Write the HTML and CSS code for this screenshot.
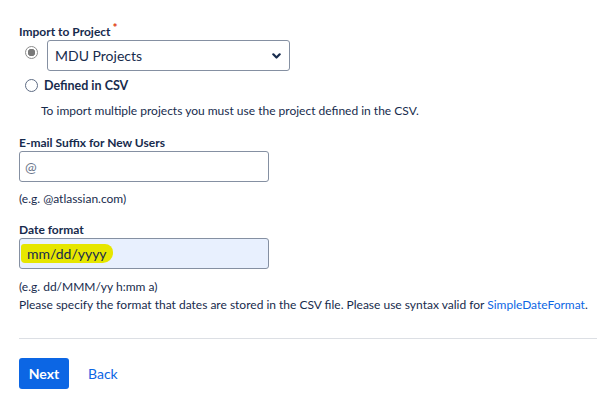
FILE: index.html
```html
<!DOCTYPE html>
<html lang="en">
<head>
<meta charset="UTF-8">
<title>Import to Project</title>
<link rel="stylesheet" href="styles.css">
</head>
<body>
<form class="import-form">
  <div class="field field-project">
    <div class="field-label">Import to Project<span class="required">*</span></div>
    <div class="radio-row">
      <span class="radio radio-checked"></span>
      <div class="select">
        <span>MDU Projects</span>
        <svg class="chevron" width="9" height="6" viewBox="0 0 9 6"><path d="M1.3 1.3 L4.5 4.5 L7.7 1.3" fill="none" stroke="#172b4d" stroke-width="2.2" stroke-linecap="round" stroke-linejoin="round"/></svg>
      </div>
    </div>
    <div class="radio-row radio-row-csv">
      <span class="radio"></span>
      <span class="radio-label">Defined in CSV</span>
    </div>
    <div class="help help-indented">To import multiple projects you must use the project defined in the CSV.</div>
  </div>

  <div class="field">
    <div class="field-label">E-mail Suffix for New Users</div>
    <div class="text-input">@</div>
    <div class="help">(e.g. @atlassian.com)</div>
  </div>

  <div class="field">
    <div class="field-label">Date format</div>
    <div class="text-input text-input-filled"><span class="marker">mm/dd/yyyy</span></div>
    <div class="help help-date">(e.g. dd/MMM/yy h:mm a)</div>
    <div class="help help-tight">Please specify the format that dates are stored in the CSV file. Please use syntax valid for <a href="#">SimpleDateFormat</a>.</div>
  </div>

  <div class="buttons">
    <button type="button" class="btn-primary">Next</button>
    <a href="#" class="btn-link">Back</a>
  </div>
</form>
</body>
</html>
```

FILE: styles.css
```css
body {
  margin: 0;
  background: #fff;
  color: #172b4d;
  font-family: Lato, "Liberation Sans", sans-serif;
}
.import-form {
  padding: 20px 0 0 19px;
}
.field {
  margin-bottom: 15px;
}
.field-project {
  margin-bottom: 16px;
}
.field-label {
  font-size: 12px;
  font-weight: bold;
  line-height: 16px;
}
.required {
  color: #de350b;
  font-size: 12px;
  vertical-align: 4px;
  margin-left: 2px;
}
.radio-row {
  display: flex;
  align-items: center;
  gap: 9px;
  margin-left: 6px;
}
.radio {
  box-sizing: border-box;
  width: 13px;
  height: 13px;
  border: 1px solid #5e6c84;
  border-radius: 50%;
  background: #fff;
  flex: none;
}
.radio-checked {
  border-color: #8d8d8d;
  background: radial-gradient(circle, #7a7a7a 0 3.5px, #fff 4px);
  align-self: flex-start;
  margin-top: 6px;
}
.select {
  box-sizing: border-box;
  width: 243px;
  height: 31px;
  border: 1px solid #8590a2;
  border-radius: 3px;
  display: flex;
  align-items: center;
  justify-content: space-between;
  padding: 0 8px 0 7px;
  font-size: 14px;
}
.radio-row-csv {
  margin-top: 7px;
  gap: 6px;
}
.radio-label {
  font-size: 12.5px;
  font-weight: bold;
}
.help {
  font-size: 12px;
  line-height: 16px;
  margin-top: 9px;
}
.help-indented {
  margin-left: 22px;
  margin-top: 10px;
}
.help-date {
  margin-top: 10px;
}
.help-tight {
  margin-top: 2px;
}
.text-input {
  box-sizing: border-box;
  width: 250px;
  height: 31px;
  border: 1px solid #8590a2;
  border-radius: 3px;
  display: flex;
  align-items: center;
  padding: 0 5px;
  font-size: 14px;
  color: #6b778c;
}
.text-input-filled {
  background: #e8f0fe;
  color: #172b4d;
  padding: 0 0 0 1px;
}
.marker {
  background: #e6e600;
  padding: 1px 6px 1px 6px;
  border-radius: 3px 8px 10px 4px;
}
a {
  color: #0c66e4;
  text-decoration: none;
}
.buttons {
  border-top: 1px solid #dcdfe4;
  margin-top: 25px;
  padding-top: 19px;
  display: flex;
  align-items: center;
  gap: 19px;
}
.btn-primary {
  width: 50px;
  height: 31px;
  border: none;
  border-radius: 3px;
  background: #0c66e4;
  color: #fff;
  font-family: inherit;
  font-size: 14px;
  font-weight: bold;
}
.btn-link {
  font-size: 14px;
}
```
